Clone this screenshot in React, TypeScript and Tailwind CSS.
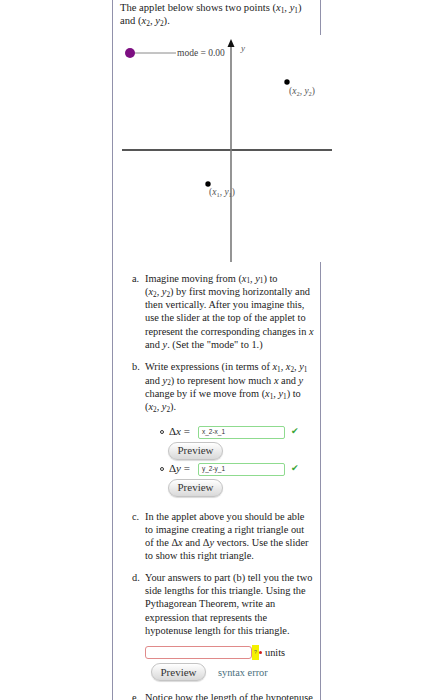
import React from "react";

const V = ({ v, s }: { v: string; s?: string }) => (
  <span className="whitespace-nowrap">
    <i>{v}</i>
    {s && <sub className="text-[70%]">{s}</sub>}
  </span>
);

const Pt = ({ n }: { n: string }) => (
  <span className="whitespace-nowrap">
    (<V v="x" s={n} />, <V v="y" s={n} />)
  </span>
);

const D = ({ v }: { v: string }) => (
  <span className="whitespace-nowrap">
    Δ<i>{v}</i>
  </span>
);

// one rendered line of text, wrapped the way the original page wraps
const L = ({ children }: { children: React.ReactNode }) => <div className="whitespace-nowrap">{children}</div>;

function PreviewButton({ className = "" }: { className?: string }) {
  return (
    <button
      className={
        "block h-[18px] w-[55px] rounded-full border border-[#c4c4c4] bg-gradient-to-b from-white to-[#d9d9d9] text-[11px] leading-none text-[#333] shadow-[0_1px_1px_rgba(0,0,0,0.15)] " +
        className
      }
    >
      Preview
    </button>
  );
}

function Applet() {
  return (
    <div className="ml-[2px] mt-[7px] h-[227px] w-[210px] bg-white">
      <svg width="210" height="227" viewBox="0 0 210 227">
        {/* slider */}
        <line x1="12" y1="18" x2="54" y2="18" stroke="#8a8a8a" strokeWidth="1" />
        <circle cx="8" cy="18" r="5" fill="#7d0f82" />
        <text x="55" y="21" fontSize="9.5" fill="#444" fontFamily="Liberation Serif, serif">
          mode = 0.00
        </text>
        {/* axes */}
        <line x1="0" y1="115" x2="210" y2="115" stroke="#1e1e1e" strokeWidth="1.3" />
        <line x1="109" y1="10" x2="109" y2="227" stroke="#7a7a7a" strokeWidth="1.6" />
        <polygon points="109,4 105.5,12 112.5,12" fill="#111" />
        <text x="119" y="16" fontSize="9" fontStyle="italic" fill="#555" fontFamily="Liberation Serif, serif">
          y
        </text>
        {/* points */}
        <circle cx="165" cy="47" r="2.7" fill="#000" />
        <text x="167" y="59" fontSize="9.5" fill="#555" fontFamily="Liberation Serif, serif">
          (<tspan fontStyle="italic">x</tspan>
          <tspan fontSize="6.5" dy="1.5">2</tspan>
          <tspan dy="-1.5">, </tspan>
          <tspan fontStyle="italic">y</tspan>
          <tspan fontSize="6.5" dy="1.5">2</tspan>
          <tspan dy="-1.5">)</tspan>
        </text>
        <circle cx="86" cy="149" r="2.7" fill="#000" />
        <text x="87" y="160" fontSize="9.5" fill="#555" fontFamily="Liberation Serif, serif">
          (<tspan fontStyle="italic">x</tspan>
          <tspan fontSize="6.5" dy="1.5">1</tspan>
          <tspan dy="-1.5">, </tspan>
          <tspan fontStyle="italic">y</tspan>
          <tspan fontSize="6.5" dy="1.5">1</tspan>
          <tspan dy="-1.5">)</tspan>
        </text>
      </svg>
    </div>
  );
}

function Item({ mark, children, className = "" }: { mark: string; children: React.ReactNode; className?: string }) {
  return (
    <div className={"flex " + className}>
      <span className="w-[13px] shrink-0">{mark}</span>
      <div className="min-w-0 flex-1">{children}</div>
    </div>
  );
}

function AnswerRow({ label, value }: { label: string; value: string }) {
  return (
    <div className="flex h-[19px] items-center text-[11px]">
      <span className="mr-[5px] h-[4px] w-[4px] rounded-full border border-[#333]" />
      <span className="whitespace-nowrap">
        Δ<i>{label}</i> =
      </span>
      <span className="ml-[8px] flex h-[13px] w-[87px] items-center rounded-[2px] border-[1.5px] border-[#8fdb8f] px-[3px] font-['Liberation_Sans',sans-serif] text-[6.5px] text-[#333]">
        {value}
      </span>
      <span className="ml-[6px] text-[9px] text-[#3aa63a]">✔</span>
    </div>
  );
}

export default function App() {
  return (
    <div className="min-h-[700px] overflow-hidden bg-white font-['Liberation_Serif',serif] text-[10.35px] leading-[13.3px] text-[#1c1c1c]">
      <div className="ml-[112px] min-h-[700px] w-[209px] border-x border-[#9191ab] pl-[7px] pr-[6px] pt-[1px]">
        <div className="text-[10.6px]">
          <L>
            The applet below shows two points <Pt n="1" />
          </L>
          <L>
            and <Pt n="2" />.
          </L>
        </div>
        <Applet />
        <div className="mt-[10px] pl-[12px]">
          <Item mark="a.">
            <L>
              Imagine moving from <Pt n="1" /> to
            </L>
            <L>
              <Pt n="2" /> by first moving horizontally and
            </L>
            <L>then vertically. After you imagine this,</L>
            <L>use the slider at the top of the applet to</L>
            <L>
              represent the corresponding changes in <i>x</i>
            </L>
            <L>
              and <i>y</i>. (Set the "mode" to 1.)
            </L>
          </Item>
          <Item mark="b." className="mt-[9px]">
            <L>
              Write expressions (in terms of <V v="x" s="1" />, <V v="x" s="2" />, <V v="y" s="1" />
            </L>
            <L>
              and <V v="y" s="2" />) to represent how much <i>x</i> and <i>y</i>
            </L>
            <L>
              change by if we move from <Pt n="1" /> to
            </L>
            <L>
              <Pt n="2" />.
            </L>
            <div className="mt-[9px] pl-[15px]">
              <AnswerRow label="x" value="x_2-x_1" />
              <PreviewButton className="ml-[8px]" />
              <AnswerRow label="y" value="y_2-y_1" />
              <PreviewButton className="ml-[8px]" />
            </div>
          </Item>
          <Item mark="c." className="mt-[13px]">
            <L>In the applet above you should be able</L>
            <L>to imagine creating a right triangle out</L>
            <L>
              of the <D v="x" /> and <D v="y" /> vectors. Use the slider
            </L>
            <L>to show this right triangle.</L>
          </Item>
          <Item mark="d." className="mt-[8px]">
            <L>Your answers to part (b) tell you the two</L>
            <L>side lengths for this triangle. Using the</L>
            <L>Pythagorean Theorem, write an</L>
            <L>expression that represents the</L>
            <L>hypotenuse length for this triangle.</L>
            <div className="mt-[8px] flex h-[15px] items-center">
              <span className="h-[13px] w-[107px] rounded-[3px] border-[1.5px] border-[#e08a8a]" />
              <span className="flex h-[15px] w-[7px] items-center justify-center bg-[#f4f000] font-['Liberation_Sans',sans-serif] text-[5px] leading-none text-[#555]">
                ?
              </span>
              <span className="h-[3px] w-[3px] rounded-full bg-[#d02020]" />
              <span className="ml-[3px]">units</span>
            </div>
            <div className="mt-[3px] flex items-center">
              <PreviewButton className="ml-[6px]" />
              <span className="ml-[12px] text-[#4b6f7e]">syntax error</span>
            </div>
          </Item>
          <Item mark="e." className="mt-[10px]">
            <L>Notice how the length of the hypotenuse</L>
          </Item>
        </div>
      </div>
    </div>
  );
}
